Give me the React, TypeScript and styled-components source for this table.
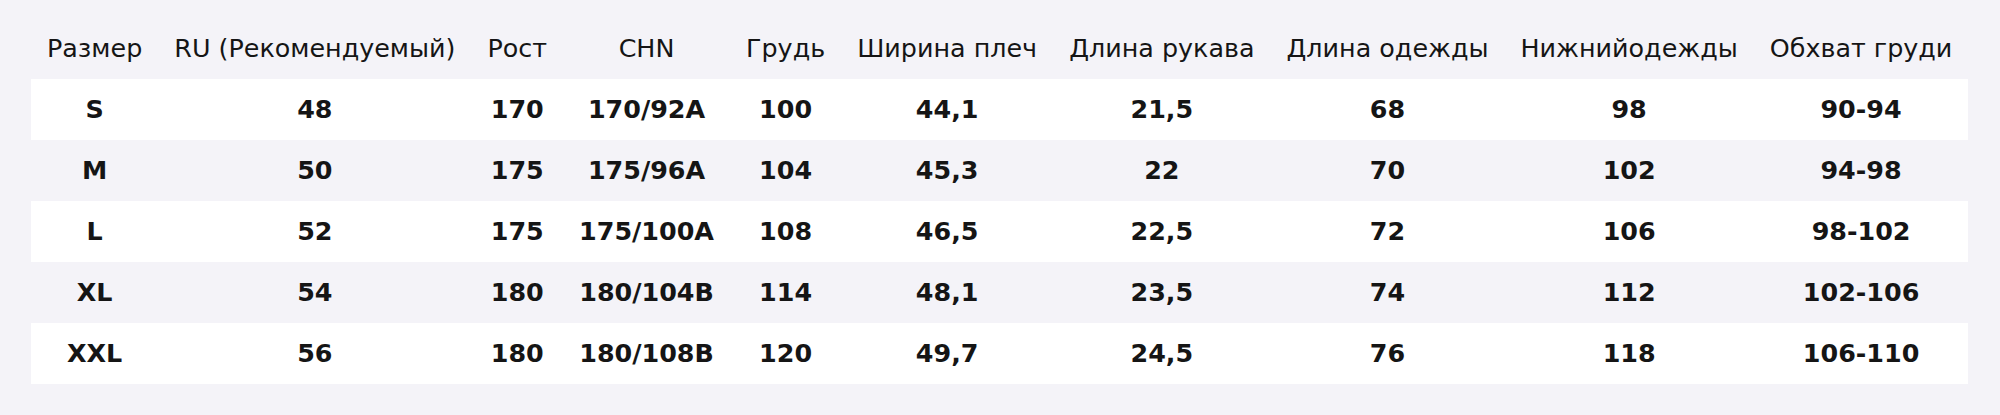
import React from "react";
import styled, { createGlobalStyle } from "styled-components";

const GlobalStyle = createGlobalStyle`
  html, body {
    margin: 0;
    padding: 0;
    background: #f4f3f8;
  }
`;

const Page = styled.div`
  padding: 18px 31px 31px;
  font-family: "DejaVu Sans", "Liberation Sans", sans-serif;
  color: #151515;
`;

const Table = styled.table`
  border-collapse: collapse;
  border-spacing: 0;
`;

const HeadCell = styled.th`
  font-weight: normal;
  font-size: 25.4px;
  line-height: 29px;
  padding: 16px;
  white-space: nowrap;
  text-align: center;
`;

const Row = styled.tr<{ $striped: boolean }>`
  background: ${(p) => (p.$striped ? "#ffffff" : "transparent")};
`;

const Cell = styled.td`
  font-weight: bold;
  font-size: 25.4px;
  line-height: 29px;
  padding: 16px;
  white-space: nowrap;
  text-align: center;
`;

const headers = [
  "Размер",
  "RU (Рекомендуемый)",
  "Рост",
  "CHN",
  "Грудь",
  "Ширина плеч",
  "Длина рукава",
  "Длина одежды",
  "Нижнийодежды",
  "Обхват груди",
];

const rows = [
  ["S", "48", "170", "170/92A", "100", "44,1", "21,5", "68", "98", "90-94"],
  ["M", "50", "175", "175/96A", "104", "45,3", "22", "70", "102", "94-98"],
  ["L", "52", "175", "175/100A", "108", "46,5", "22,5", "72", "106", "98-102"],
  ["XL", "54", "180", "180/104B", "114", "48,1", "23,5", "74", "112", "102-106"],
  ["XXL", "56", "180", "180/108B", "120", "49,7", "24,5", "76", "118", "106-110"],
];

const App: React.FC = () => {
  return (
    <>
      <GlobalStyle />
      <Page>
        <Table>
          <thead>
            <tr>
              {headers.map((h) => (
                <HeadCell key={h}>{h}</HeadCell>
              ))}
            </tr>
          </thead>
          <tbody>
            {rows.map((r, i) => (
              <Row key={r[0]} $striped={i % 2 === 0}>
                {r.map((c, j) => (
                  <Cell key={j}>{c}</Cell>
                ))}
              </Row>
            ))}
          </tbody>
        </Table>
      </Page>
    </>
  );
};

export default App;
